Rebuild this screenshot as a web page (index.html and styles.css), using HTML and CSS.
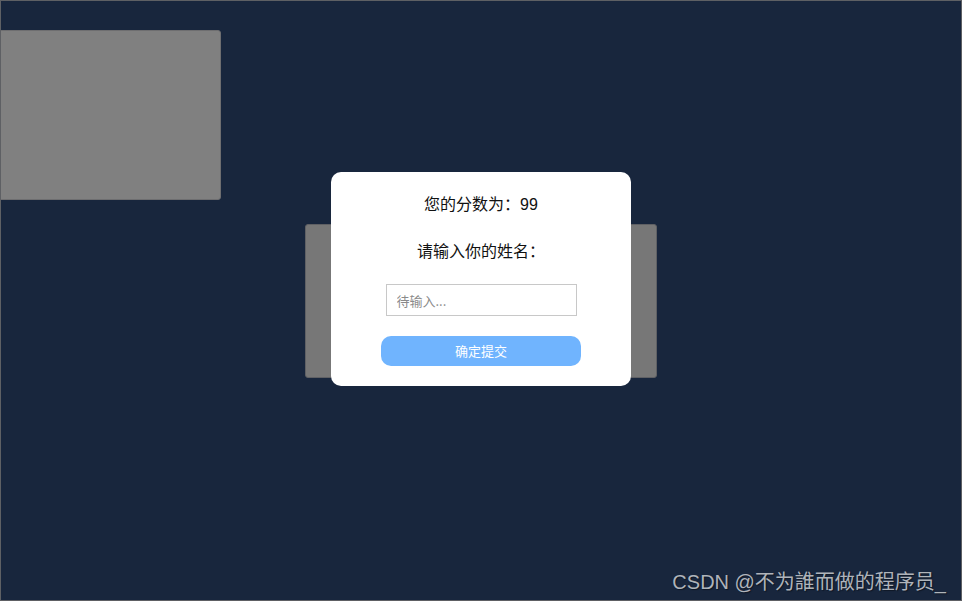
FILE: index.html
```html
<!DOCTYPE html>
<html lang="zh">
<head>
<meta charset="utf-8">
<title>Score</title>
<link rel="stylesheet" href="styles.css">
</head>
<body>
<div class="stage">
  <div class="block block-left"></div>
  <div class="block block-mid"></div>
  <div class="modal">
    <p class="line line-score">您的分数为：99</p>
    <p class="line line-name">请输入你的姓名：</p>
    <input class="name-input" type="text" placeholder="待输入...">
    <button class="submit">确定提交</button>
  </div>
  <div class="watermark">CSDN @不为誰而做的程序员_</div>
</div>
</body>
</html>
```
FILE: styles.css
```css
html, body {
  margin: 0;
  padding: 0;
  width: 962px;
  height: 601px;
  overflow: hidden;
}
* { box-sizing: border-box; }
body {
  font-family: "Liberation Sans", "Noto Sans CJK SC", sans-serif;
}
.stage {
  position: relative;
  width: 962px;
  height: 601px;
  background: #18263d;
  border: 1px solid #5e6064;
  overflow: hidden;
}
.block {
  position: absolute;
  border-radius: 3px;
}
.block-left {
  left: -10px;
  top: 29px;
  width: 230px;
  height: 170px;
  background: #808080;
  border: 1px solid #6e6e70;
}
.block-mid {
  left: 304px;
  top: 223px;
  width: 352px;
  height: 154px;
  background: #777777;
  border: 1px solid #5f6064;
}
.modal {
  position: absolute;
  left: 330px;
  top: 171px;
  width: 300px;
  height: 214px;
  background: #fff;
  border-radius: 10px;
  display: flex;
  flex-direction: column;
  align-items: center;
  padding-top: 22px;
}
.line {
  margin: 0;
  font-size: 16px;
  line-height: 22px;
  color: #111;
}
.line-name {
  margin-top: 25px;
}
.name-input {
  margin-top: 21px;
  width: 191px;
  height: 32px;
  border: 1px solid #c8c8c8;
  padding: 0 10px;
  font-family: "Noto Sans CJK SC", sans-serif;
  font-size: 13px;
  line-height: 30px;
  outline: none;
  background: #fff;
}
.name-input::placeholder {
  color: #8a8a8a;
}
.submit {
  margin-top: 20px;
  width: 200px;
  height: 30px;
  border: none;
  border-radius: 10px;
  background: #70b4fe;
  color: #fff;
  font-family: "Noto Sans CJK SC", sans-serif;
  font-size: 13px;
  line-height: 28px;
  padding: 0;
}
.watermark {
  position: absolute;
  right: 15px;
  bottom: 6px;
  font-size: 20px;
  line-height: 24px;
  color: rgba(205, 208, 212, 0.85);
  text-shadow: 1px 1px 1px rgba(0,0,0,0.4);
}
```
